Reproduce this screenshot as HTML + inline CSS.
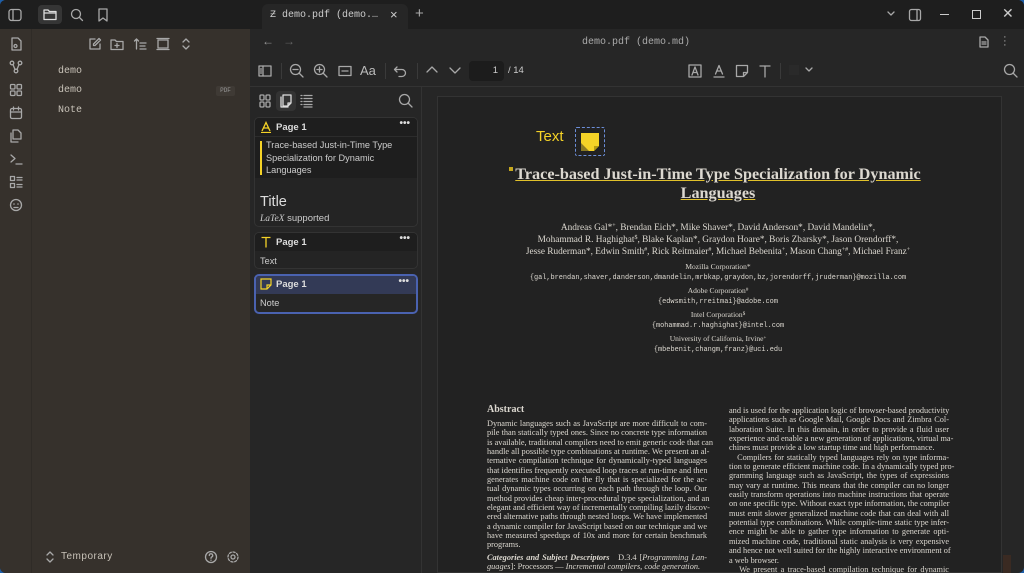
<!DOCTYPE html>
<html><head><meta charset="utf-8"><style>
*{margin:0;padding:0;box-sizing:border-box}
body{width:1024px;height:573px;overflow:hidden;background:#1d5ea8;font-family:"Liberation Sans",sans-serif;position:relative}
.abs{position:absolute}
#win{position:absolute;left:0;top:0;width:1024px;height:573px;background:#262626;border-radius:6px;overflow:hidden}
#side{left:0;top:0;width:250px;height:573px;background:#36312c}
#sidetop{left:0;top:0;width:250px;height:29px;background:#1e1e1e}
#tabbar{left:250px;top:0;width:774px;height:29px;background:#1e1e1e}
#ribbon{left:0;top:29px;width:32px;height:544px;border-right:1px solid #2f2b27}
svg{position:absolute}
.ic{stroke:#a8a8a8;fill:none;stroke-width:1.3;stroke-linecap:round;stroke-linejoin:round}
.ft{position:absolute;color:#c8c2b8;font-size:10px;font-family:"Liberation Mono",monospace}
.card{position:absolute;left:254px;width:164px;border:1px solid #333;border-radius:5px;background:#242424;overflow:hidden}
.ch{height:18px;background:#1e1e1e;color:#ddd;font-size:9.5px;font-weight:bold;padding:4px 0 0 21px;position:relative}
.dots{position:absolute;right:7px;top:0;color:#ddd;font-size:10px;letter-spacing:0px}
.pdf{font-family:"Liberation Serif",serif;color:#dcd8d0;position:absolute}
.pdf sup{line-height:0;vertical-align:0;position:relative;top:-0.45em}
.ln{font-size:8.3px;line-height:9.35px;text-align:justify;text-align-last:justify;white-space:nowrap;height:9.35px}
.ln.e{text-align-last:left}
.c{text-align:center;white-space:nowrap}
.mono{font-family:"Liberation Mono",monospace}
</style></head><body>
<div id="win">
<div class="abs" id="side"></div>
<div class="abs" id="sidetop"></div>
<div class="abs" id="tabbar"></div>
<div class="abs" id="ribbon"></div>

<svg style="left:8px;top:8px" width="14" height="14"><rect class="ic" x="1" y="1.5" width="12" height="11" rx="2.5"/><line class="ic" x1="5" y1="2" x2="5" y2="12"/></svg>
<div class="abs" style="left:38px;top:5px;width:24px;height:19px;background:#353535;border-radius:4px"></div>
<svg style="left:43px;top:8px" width="14" height="13"><path class="ic" d="M1 2h4l1.5 1.5H13v8H1z M1 5h12" style="stroke:#ddd"/></svg>
<svg style="left:70px;top:8px" width="14" height="14"><circle class="ic" cx="6" cy="6" r="4.5"/><line class="ic" x1="9.5" y1="9.5" x2="12.5" y2="12.5"/></svg>
<svg style="left:97px;top:8px" width="12" height="14"><path class="ic" d="M2 1h8v12l-4-3-4 3z"/></svg>

<svg style="left:9px;top:37px" width="14" height="14"><path class="ic" d="M3 1h6l3 3v9H3z M5 9a1.5 1.5 0 1 0 3 0a1.5 1.5 0 1 0-3 0"/></svg>
<svg style="left:9px;top:60px" width="14" height="14"><circle class="ic" cx="3" cy="3" r="1.8"/><circle class="ic" cx="11" cy="3" r="1.8"/><circle class="ic" cx="7" cy="11" r="1.8"/><path class="ic" d="M4 4.5l2 5M10 4.5l-2 5"/></svg>
<svg style="left:9px;top:83px" width="14" height="14"><rect class="ic" x="1.5" y="1.5" width="4.5" height="4.5" rx="1"/><rect class="ic" x="8" y="1.5" width="4.5" height="4.5" rx="1"/><rect class="ic" x="1.5" y="8" width="4.5" height="4.5" rx="1"/><rect class="ic" x="8" y="8" width="4.5" height="4.5" rx="1"/></svg>
<svg style="left:9px;top:106px" width="14" height="14"><rect class="ic" x="1.5" y="2.5" width="11" height="10" rx="1.5"/><path class="ic" d="M1.5 6h11M4.5 1v3M9.5 1v3"/></svg>
<svg style="left:9px;top:129px" width="14" height="14"><path class="ic" d="M4 1h5l3 3v6H4z M2 4v9h7"/></svg>
<svg style="left:9px;top:152px" width="14" height="14"><path class="ic" d="M2 3l4 3.5-4 3.5M7 12h6"/></svg>
<svg style="left:9px;top:175px" width="14" height="14"><rect class="ic" x="1.5" y="1.5" width="4" height="4"/><rect class="ic" x="1.5" y="8.5" width="4" height="4"/><path class="ic" d="M8 2.5h5M8 5h5M8 9.5h5M8 12h5"/></svg>
<svg style="left:9px;top:198px" width="14" height="14"><circle class="ic" cx="7" cy="7" r="5.5"/><circle cx="5" cy="6" r=".8" fill="#a8a8a8"/><circle cx="9" cy="6" r=".8" fill="#a8a8a8"/><path class="ic" d="M5 9.5h4"/></svg>

<svg style="left:88px;top:37px" width="14" height="14"><path class="ic" d="M7 2H2v10h10V7 M11 1.5l1.5 1.5L7 8.5H5.5V7z"/></svg>
<svg style="left:110px;top:37px" width="14" height="14"><path class="ic" d="M1 3h4l1.5 1.5H13v8H1z M7 6.5v4M5 8.5h4"/></svg>
<svg style="left:133px;top:37px" width="14" height="14"><path class="ic" d="M3.5 12V2M1.5 4l2-2 2 2M7 6h6M7 9h5M7 12h6"/></svg>
<svg style="left:156px;top:37px" width="14" height="14"><rect class="ic" x="2" y="3" width="10" height="8"/><path class="ic" d="M1 1.5h12M1 12.5h12"/></svg>
<svg style="left:180px;top:37px" width="12" height="14"><path class="ic" d="M3 5l3-3 3 3M3 9l3 3 3-3"/></svg>

<div class="ft" style="left:58px;top:66px">demo</div>
<div class="ft" style="left:58px;top:85px">demo</div>
<div class="abs" style="left:216px;top:86px;width:19px;height:10px;background:#3f3a35;border-radius:2px;color:#999;font-size:6px;font-family:'Liberation Mono',monospace;text-align:center;line-height:10px">PDF</div>
<div class="ft" style="left:58px;top:105px">Note</div>

<svg style="left:45px;top:551px" width="10" height="12"><path class="ic" d="M2 4l3-3 3 3M2 8l3 3 3-3"/></svg>
<div class="ft" style="left:61px;top:551px;font-family:'Liberation Sans',sans-serif;font-size:10px;letter-spacing:.5px">Temporary</div>
<svg style="left:204px;top:550px" width="14" height="14"><circle class="ic" cx="7" cy="7" r="5.5"/><path class="ic" d="M5.3 5.5a1.7 1.7 0 1 1 2.4 1.5c-.6.3-.7.7-.7 1.3"/><circle cx="7" cy="10.2" r=".7" fill="#a8a8a8"/></svg>
<svg style="left:226px;top:550px" width="14" height="14"><circle class="ic" cx="7" cy="7" r="2"/><circle class="ic" cx="7" cy="7" r="5" stroke-dasharray="2.2 1.7"/></svg>

<div class="abs" style="left:262px;top:4px;width:146px;height:25px;background:#262626;border-radius:6px 6px 0 0"></div>
<div class="abs" style="left:270px;top:10px;color:#ccc;font-size:10px;font-family:'Liberation Mono',monospace">Ƶ demo.pdf (demo.…</div>
<div class="abs" style="left:390px;top:7px;color:#ccc;font-size:13px">×</div>
<div class="abs" style="left:415px;top:5px;color:#aaa;font-size:15px">+</div>
<svg style="left:886px;top:10px" width="10" height="8"><path class="ic" d="M2 2l3 3 3-3"/></svg>
<svg style="left:908px;top:8px" width="14" height="14"><rect class="ic" x="1.5" y="1.5" width="11" height="11" rx="2"/><line class="ic" x1="9" y1="2" x2="9" y2="12"/></svg>
<div class="abs" style="left:940px;top:14px;width:9px;height:1.3px;background:#ccc"></div>
<div class="abs" style="left:972px;top:10px;width:9px;height:9px;border:1.3px solid #ccc"></div>
<div class="abs" style="left:1002px;top:5px;color:#ccc;font-size:14px">✕</div>

<div class="abs" style="left:262px;top:34px;color:#999;font-size:12px">←</div>
<div class="abs" style="left:283px;top:34px;color:#666;font-size:12px">→</div>
<div class="abs" style="left:582px;top:37px;color:#aaa;font-size:10px;font-family:'Liberation Mono',monospace">demo.pdf (demo.md)</div>
<svg style="left:979px;top:36px" width="10" height="12"><path class="ic" d="M1 1h5l3 3v7H1z M3 6h4M3 8h4"/></svg>
<div class="abs" style="left:1003px;top:35px;color:#aaa;font-size:11px;line-height:4px;width:4px">·<br>·<br>·</div>

<div class="abs" style="left:250px;top:86px;width:774px;height:1px;background:#333"></div>
<svg style="left:258px;top:65px" width="14" height="12"><rect class="ic" x="1" y="1" width="12" height="10"/><path class="ic" d="M5 1v10M2.5 4h1M2.5 6h1M2.5 8h1"/></svg>
<div class="abs" style="left:281px;top:63px;width:1px;height:16px;background:#3a3a3a"></div>
<svg style="left:289px;top:63px" width="16" height="16"><circle class="ic" cx="6.5" cy="6.5" r="5"/><path class="ic" d="M4 6.5h5M10 10l4 4"/></svg>
<svg style="left:313px;top:63px" width="16" height="16"><circle class="ic" cx="6.5" cy="6.5" r="5"/><path class="ic" d="M4 6.5h5M6.5 4v5M10 10l4 4"/></svg>
<svg style="left:338px;top:65px" width="14" height="12"><rect class="ic" x="1" y="1.5" width="12" height="9" stroke="#777"/><path class="ic" d="M4 6h6" stroke="#777"/></svg>
<div class="abs" style="left:360px;top:63px;color:#bbb;font-size:13px">Aa</div>
<div class="abs" style="left:385px;top:63px;width:1px;height:16px;background:#3a3a3a"></div>
<svg style="left:393px;top:64px" width="14" height="14"><path class="ic" d="M4 3L1.5 5.5 4 8M1.5 5.5H9a3.5 3.5 0 0 1 0 7H6" stroke="#666"/></svg>
<div class="abs" style="left:417px;top:63px;width:1px;height:16px;background:#3a3a3a"></div>
<svg style="left:426px;top:66px" width="12" height="8"><path class="ic" d="M1 6l5-5 5 5" stroke="#666"/></svg>
<svg style="left:449px;top:66px" width="12" height="8"><path class="ic" d="M1 2l5 5 5-5"/></svg>
<div class="abs" style="left:469px;top:61px;width:35px;height:20px;background:#1c1c1c;border-radius:4px;color:#ccc;font-size:9.5px;text-align:right;padding:4px 6px 0 0">1</div>
<div class="abs" style="left:508px;top:65px;color:#ccc;font-size:9.5px">/ 14</div>
<svg style="left:688px;top:64px" width="14" height="14"><rect class="ic" x="1" y="1" width="12" height="12"/><path class="ic" d="M4 11l3-8 3 8M5 8.5h4"/></svg>
<svg style="left:712px;top:64px" width="14" height="14"><path class="ic" d="M3.5 10l3.5-8.5L10.5 10M4.7 7h4.6M2 13h10"/></svg>
<svg style="left:735px;top:64px" width="14" height="14"><path class="ic" d="M1.5 1.5h11v7l-4 4h-7z M8.5 12.5v-4h4"/></svg>
<svg style="left:758px;top:64px" width="14" height="14"><path class="ic" d="M2 2h10M7 2v11"/></svg>
<div class="abs" style="left:780px;top:63px;width:1px;height:16px;background:#3a3a3a"></div>
<div class="abs" style="left:789px;top:65px;width:10px;height:10px;background:#2a2a2a"></div>
<svg style="left:805px;top:67px" width="8" height="6"><path class="ic" d="M1 1l3 3 3-3" stroke="#555"/></svg>
<svg style="left:1003px;top:63px" width="16" height="16"><circle class="ic" cx="6.5" cy="6.5" r="5"/><path class="ic" d="M10 10l4 4"/></svg>

<div class="abs" style="left:421px;top:87px;width:1px;height:486px;background:#333"></div>
<svg style="left:259px;top:94px" width="12" height="14"><rect class="ic" x="1" y="1" width="4" height="5" rx="1"/><rect class="ic" x="7" y="1" width="4" height="5" rx="1"/><rect class="ic" x="1" y="8" width="4" height="5" rx="1"/><rect class="ic" x="7" y="8" width="4" height="5" rx="1"/></svg>
<div class="abs" style="left:276px;top:91px;width:20px;height:20px;background:#333;border-radius:4px"></div>
<svg style="left:279px;top:94px" width="14" height="14"><path class="ic" d="M4 1h8v8l-3 3H4z M2 3v10h7M9 12V9h3" style="stroke:#ddd"/></svg>
<svg style="left:300px;top:94px" width="13" height="14"><path class="ic" d="M1 1.5h1M4 1.5h8M1 4.5h1M4 4.5h8M1 7.5h1M4 7.5h8M1 10.5h1M4 10.5h8M4 13h8"/></svg>
<svg style="left:398px;top:93px" width="16" height="16"><circle class="ic" cx="6.5" cy="6.5" r="5"/><path class="ic" d="M10 10l4 4"/></svg>

<div class="card" style="top:117px;height:110px">
 <div class="ch">Page 1<span class="dots">•••</span>
  <svg style="left:5px;top:3px" width="12" height="12"><path d="M2 10L6 1.5 10 10M3.5 7h5M1 11.5h10" stroke="#f5d327" stroke-width="1.3" fill="none"/></svg></div>
 <div style="background:#1e1e1e;height:42px;position:relative;border-top:1px solid #2c2c2c">
  <div class="abs" style="left:5px;top:4px;width:2px;height:34px;background:#f5d327"></div>
  <div class="abs" style="left:11px;top:2px;color:#ccc;font-size:9.2px;line-height:12.7px;width:145px">Trace-based Just-in-Time Type Specialization for Dynamic Languages</div>
 </div>
 <div class="abs" style="left:5px;top:76px;color:#ddd;font-size:14.5px">Title</div>
 <div class="abs" style="left:5px;top:95px;color:#ccc;font-size:9.5px"><i style="font-family:'Liberation Serif',serif">LaTeX</i> supported</div>
</div>
<div class="card" style="top:232px;height:37px">
 <div class="ch">Page 1<span class="dots">•••</span>
  <svg style="left:5px;top:3px" width="12" height="12"><path d="M1.5 1.5h9M6 1.5v10" stroke="#f5d327" stroke-width="1.3" fill="none"/></svg></div>
 <div class="abs" style="left:5px;top:23px;color:#ccc;font-size:9.2px">Text</div>
</div>
<div class="card" style="top:274px;height:40px;border:2px solid #4a62b0;background:#262626">
 <div class="ch" style="background:#333a56;height:18px;padding-left:20px;padding-top:3px">Page 1<span class="dots">•••</span>
  <svg style="left:4px;top:2px" width="12" height="12"><path d="M1 1h10v6l-4 4H1z M7 11V7h4" stroke="#f5d327" stroke-width="1.2" fill="none"/></svg></div>
 <div class="abs" style="left:4px;top:22px;color:#ccc;font-size:9.2px">Note</div>
</div>

<div class="abs" style="left:437px;top:96px;width:565px;height:477px;background:#222;border:1px solid #333"></div>
<div class="abs" style="left:536px;top:128px;color:#f5d327;font-size:15px">Text</div>
<div class="abs" style="left:575px;top:127px;width:30px;height:29px;border:1.3px dashed #6c8ed8;border-radius:2px"></div>
<svg style="left:580px;top:132px" width="20" height="20"><path d="M1 1h18v13l-5 5H1z" fill="#f5d327"/><path d="M14 19v-5h5" fill="#b59a10"/><path d="M1 11l8 8H1z" fill="#222" opacity=".5"/></svg>

<div class="pdf c" style="left:487px;top:165px;width:462px;font-size:16.2px;font-weight:bold;line-height:19px"><span style="text-decoration:underline;text-decoration-color:#e1c12a">Trace-based Just-in-Time Type Specialization for Dynamic</span><br><span style="text-decoration:underline;text-decoration-color:#e1c12a">Languages</span></div>
<div class="abs" style="left:509px;top:167px;width:4px;height:4px;background:#c6a81e"></div>
<div class="pdf c" style="left:487px;top:222px;width:462px;font-size:9.3px;line-height:12px">Andreas Gal*<sup style="font-size:6px">+</sup>, Brendan Eich*, Mike Shaver*, David Anderson*, David Mandelin*,<br>Mohammad R. Haghighat<sup style="font-size:6px">$</sup>, Blake Kaplan*, Graydon Hoare*, Boris Zbarsky*, Jason Orendorff*,<br>Jesse Ruderman*, Edwin Smith<sup style="font-size:6px">#</sup>, Rick Reitmaier<sup style="font-size:6px">#</sup>, Michael Bebenita<sup style="font-size:6px">+</sup>, Mason Chang<sup style="font-size:6px">+#</sup>, Michael Franz<sup style="font-size:6px">+</sup></div>
<div class="pdf c" style="left:487px;top:262px;width:462px;font-size:7.5px;line-height:9.5px">Mozilla Corporation*<br><span class="mono" style="font-size:6.9px">{gal,brendan,shaver,danderson,dmandelin,mrbkap,graydon,bz,jorendorff,jruderman}@mozilla.com</span></div>
<div class="pdf c" style="left:487px;top:286px;width:462px;font-size:7.5px;line-height:9.5px">Adobe Corporation<sup style="font-size:5px">#</sup><br><span class="mono" style="font-size:6.9px">{edwsmith,rreitmai}@adobe.com</span></div>
<div class="pdf c" style="left:487px;top:310px;width:462px;font-size:7.5px;line-height:9.5px">Intel Corporation<sup style="font-size:5px">$</sup><br><span class="mono" style="font-size:6.9px">{mohammad.r.haghighat}@intel.com</span></div>
<div class="pdf c" style="left:487px;top:334px;width:462px;font-size:7.5px;line-height:9.5px">University of California, Irvine<sup style="font-size:5px">+</sup><br><span class="mono" style="font-size:6.9px">{mbebenit,changm,franz}@uci.edu</span></div>

<div class="pdf" style="left:487px;top:404px;font-size:10px;font-weight:bold">Abstract</div>
<div class="pdf" style="left:487px;top:419px;width:220px">
<div class="ln">Dynamic languages such as JavaScript are more difficult to com-</div>
<div class="ln">pile than statically typed ones. Since no concrete type information</div>
<div class="ln">is available, traditional compilers need to emit generic code that can</div>
<div class="ln">handle all possible type combinations at runtime. We present an al-</div>
<div class="ln">ternative compilation technique for dynamically-typed languages</div>
<div class="ln">that identifies frequently executed loop traces at run-time and then</div>
<div class="ln">generates machine code on the fly that is specialized for the ac-</div>
<div class="ln">tual dynamic types occurring on each path through the loop. Our</div>
<div class="ln">method provides cheap inter-procedural type specialization, and an</div>
<div class="ln">elegant and efficient way of incrementally compiling lazily discov-</div>
<div class="ln">ered alternative paths through nested loops. We have implemented</div>
<div class="ln">a dynamic compiler for JavaScript based on our technique and we</div>
<div class="ln">have measured speedups of 10x and more for certain benchmark</div>
<div class="ln e">programs.</div>
<div class="ln" style="margin-top:3px"><b><i>Categories and Subject Descriptors</i></b> &nbsp; D.3.4 [<i>Programming Lan-</i></div>
<div class="ln e"><i>guages</i>]: Processors — <i>Incremental compilers, code generation.</i></div>
</div>
<div class="pdf" style="left:729px;top:406px;width:220px">
<div class="ln">and is used for the application logic of browser-based productivity</div>
<div class="ln">applications such as Google Mail, Google Docs and Zimbra Col-</div>
<div class="ln">laboration Suite. In this domain, in order to provide a fluid user</div>
<div class="ln">experience and enable a new generation of applications, virtual ma-</div>
<div class="ln e">chines must provide a low startup time and high performance.</div>
<div class="ln">&nbsp;&nbsp;&nbsp;Compilers for statically typed languages rely on type informa-</div>
<div class="ln">tion to generate efficient machine code. In a dynamically typed pro-</div>
<div class="ln">gramming language such as JavaScript, the types of expressions</div>
<div class="ln">may vary at runtime. This means that the compiler can no longer</div>
<div class="ln">easily transform operations into machine instructions that operate</div>
<div class="ln">on one specific type. Without exact type information, the compiler</div>
<div class="ln">must emit slower generalized machine code that can deal with all</div>
<div class="ln">potential type combinations. While compile-time static type infer-</div>
<div class="ln">ence might be able to gather type information to generate opti-</div>
<div class="ln">mized machine code, traditional static analysis is very expensive</div>
<div class="ln">and hence not well suited for the highly interactive environment of</div>
<div class="ln e">a web browser.</div>
<div class="ln">&nbsp;&nbsp;&nbsp;We present a trace-based compilation technique for dynamic</div>
</div>
<div class="abs" style="left:1003px;top:555px;width:8px;height:18px;background:#3a2a22"></div>
</div>
</body></html>
